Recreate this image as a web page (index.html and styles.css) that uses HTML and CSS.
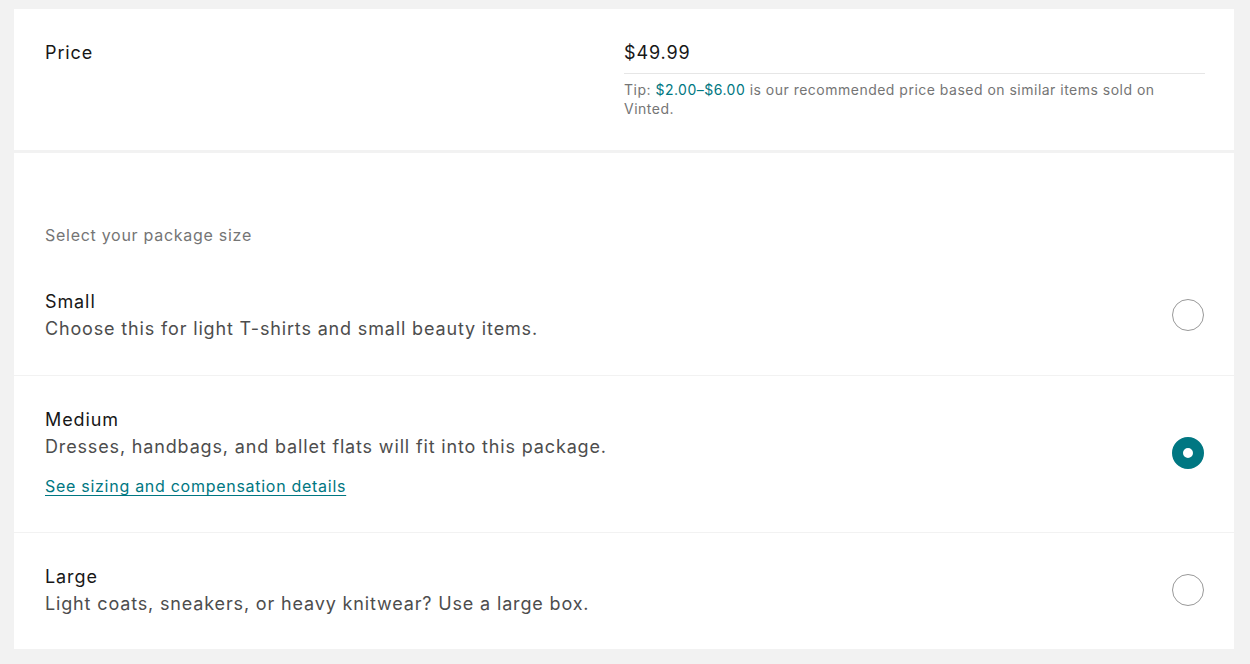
FILE: index.html
```html
<!DOCTYPE html>
<html lang="en">
<head>
<meta charset="utf-8">
<title>Price and package size</title>
<link rel="stylesheet" href="styles.css">
</head>
<body>
<main class="page">
  <section class="card price-card">
    <div class="price-label">Price</div>
    <div class="price-field">
      <div class="price-input">$49.99</div>
      <p class="tip">Tip: <span class="accent">$2.00–$6.00</span> is our recommended price based on similar items sold on Vinted.</p>
    </div>
  </section>
  <section class="card package-card">
    <div class="package-heading">Select your package size</div>
    <div class="option">
      <div class="option-text">
        <div class="option-title">Small</div>
        <div class="option-desc">Choose this for light T-shirts and small beauty items.</div>
      </div>
      <span class="radio"></span>
    </div>
    <div class="option">
      <div class="option-text">
        <div class="option-title">Medium</div>
        <div class="option-desc">Dresses, handbags, and ballet flats will fit into this package.</div>
        <a class="option-link" href="#">See sizing and compensation details</a>
      </div>
      <span class="radio radio-checked"></span>
    </div>
    <div class="option option-last">
      <div class="option-text">
        <div class="option-title">Large</div>
        <div class="option-desc">Light coats, sneakers, or heavy knitwear? Use a large box.</div>
      </div>
      <span class="radio"></span>
    </div>
  </section>
</main>
</body>
</html>
```
FILE: styles.css
```css
html, body {
  margin: 0;
  background: #f2f2f2;
  font-family: Inter, "Noto Sans", sans-serif;
  color: #171717;
  letter-spacing: 0.045em;
}
.page {
  display: flex;
  flex-direction: column;
  gap: 3px;
  padding: 9px 16px 15px 14px;
}
.card {
  background: #ffffff;
}
.price-card {
  display: grid;
  grid-template-columns: 579px 1fr;
  padding: 31px 29px 0 31px;
  height: 110px;
}
.price-label {
  font-size: 18px;
  line-height: 25px;
  letter-spacing: 0.05em;
}
.price-input {
  font-size: 18px;
  line-height: 25px;
  letter-spacing: 0.05em;
  padding-bottom: 8px;
  border-bottom: 1px solid #e6e6e6;
}
.tip {
  margin: 6px 0 0;
  font-size: 14px;
  line-height: 19px;
  color: #757575;
  letter-spacing: 0.035em;
}
.accent {
  color: #007782;
}
.package-card {
  padding-top: 71px;
}
.package-heading {
  padding: 0 30px 0 31px;
  font-size: 16px;
  line-height: 22px;
  color: #757575;
  margin-bottom: 12px;
}
.option {
  display: flex;
  align-items: center;
  justify-content: space-between;
  padding: 30px 30px 33px 31px;
  border-top: 1px solid #f2f2f2;
}
.package-heading + .option {
  border-top: none;
}
.option-last {
  padding-bottom: 32px;
}
.option-text {
  display: flex;
  flex-direction: column;
}
.option-title {
  font-size: 18px;
  line-height: 27px;
  letter-spacing: 0.05em;
  color: #171717;
}
.option-desc {
  font-size: 18px;
  line-height: 27px;
  letter-spacing: 0.047em;
  color: #4d4d4d;
}
.option-link {
  margin: 16px 0 3px;
  font-size: 16px;
  line-height: 20px;
  color: #007782;
  text-decoration: underline;
  text-underline-offset: 3px;
  text-decoration-thickness: 1px;
  align-self: flex-start;
}
.radio {
  box-sizing: border-box;
  width: 32px;
  height: 32px;
  border-radius: 50%;
  border: 1.5px solid #999999;
  background: #ffffff;
  flex: none;
}
.radio-checked {
  border: 11px solid #007782;
}
```
